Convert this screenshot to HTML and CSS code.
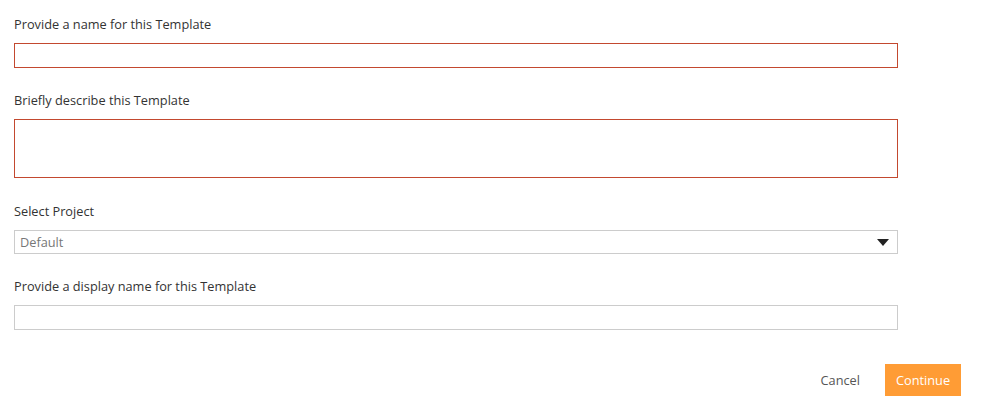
FILE: index.html
```html
<!DOCTYPE html>
<html>
<head>
<meta charset="utf-8">
<link rel="stylesheet" href="styles.css">
</head>
<body>
<form class="form">
  <div class="field">
    <label class="label">Provide a name for this Template</label>
    <input class="input input-error" type="text">
  </div>
  <div class="field field-tall">
    <label class="label">Briefly describe this Template</label>
    <textarea class="textarea input-error"></textarea>
  </div>
  <div class="field">
    <label class="label">Select Project</label>
    <div class="select">
      <span class="select-value">Default</span>
      <svg class="select-arrow" width="12" height="7" viewBox="0 0 12 7"><path d="M0 0H12L6 7Z" fill="#222"/></svg>
    </div>
  </div>
  <div class="field">
    <label class="label">Provide a display name for this Template</label>
    <input class="input" type="text">
  </div>
  <div class="actions">
    <button type="button" class="btn-cancel">Cancel</button>
    <button type="button" class="btn-continue">Continue</button>
  </div>
</form>
</body>
</html>
```
FILE: styles.css
```css
html, body {
  margin: 0;
  padding: 0;
  background: #fff;
}
body {
  font-family: "Open Sans", "Liberation Sans", sans-serif;
  font-size: 12.75px;
  color: #333;
}
.form {
  padding: 14px 31px 0 14px;
  display: flex;
  flex-direction: column;
}
.field {
  display: flex;
  flex-direction: column;
  width: 884px;
  margin-bottom: 22px;
}
.field-tall {
  margin-bottom: 23px;
}
.label {
  line-height: 20px;
  height: 20px;
  margin-bottom: 9px;
  color: #333;
}
.input {
  box-sizing: border-box;
  height: 25px;
  width: 884px;
  border: 1px solid #ccc;
  margin: 0;
  padding: 0 6px;
  font: inherit;
  outline: none;
}
.input-error {
  border-color: #c3492f;
}
.textarea {
  box-sizing: border-box;
  height: 59px;
  width: 884px;
  margin: 0;
  border: 1px solid #c3492f;
  resize: none;
  font: inherit;
  outline: none;
}
.select {
  box-sizing: border-box;
  height: 24px;
  width: 884px;
  border: 1px solid #ccc;
  display: flex;
  align-items: center;
  justify-content: space-between;
  padding: 0 8px 0 5px;
}
.select-value {
  color: #777;
}
.select-arrow {
  display: block;
}
.actions {
  display: flex;
  justify-content: flex-end;
  align-items: center;
  gap: 25px;
  margin-top: 12px;
}
.btn-cancel {
  background: none;
  border: none;
  font: inherit;
  color: #555;
  padding: 0;
}
.btn-continue {
  width: 76px;
  height: 32px;
  border: none;
  background: #ff9c35;
  color: #fff;
  font: inherit;
  padding: 0;
}
```
